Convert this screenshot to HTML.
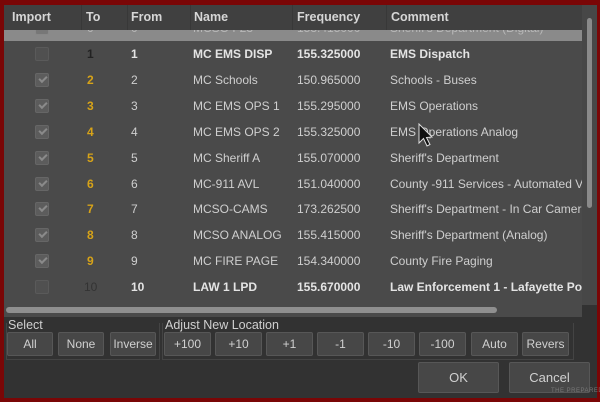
<!DOCTYPE html>
<html><head><meta charset="utf-8"><style>
*{margin:0;padding:0;box-sizing:border-box}
body{width:600px;height:402px;background:#7a0606;overflow:hidden;font-family:"Liberation Sans",sans-serif;font-size:12px;color:#cfcfcf;position:relative}
#win{position:absolute;left:4px;top:5px;width:593px;height:393px;background:#323232}
#tbl{position:absolute;left:0;top:0;width:578px;height:312px;background:#4a4a4a;overflow:hidden}
#hdr{position:absolute;left:0;top:0;width:578px;height:25px;background:#404040;font-weight:bold;font-size:12.5px;color:#d6d6d6}
#hdr span{position:absolute;top:5px}
.sep{position:absolute;top:0;width:1px;height:25px;background:#383838}
#rows{position:absolute;left:0;top:25px;width:578px;height:275px;overflow:hidden}
.r{position:absolute;left:0;width:578px;height:26px;white-space:nowrap}
.r span{position:absolute;top:6px}
.cb{position:absolute;left:31px;top:6px;width:14px;height:14px;border:1px solid #5a5a5a;background:#505050;border-radius:2px}
.cb.on{background:#5c5c5c;border-color:#666}
.cb.on:after{content:"";position:absolute;left:3px;top:2px;width:6px;height:3px;border-left:2px solid #8a8a8a;border-bottom:2px solid #8a8a8a;transform:rotate(-45deg)}
.to{color:#d7a318;font-weight:bold}
.b{font-weight:bold;color:#e4e4e4}
#vs{position:absolute;left:583px;top:13px;width:5px;height:190px;background:#8a8a8a;border-radius:3px}
#vtrack{position:absolute;left:578px;top:0;width:15px;height:300px;background:#474747}
#hs{position:absolute;left:2px;top:302px;width:491px;height:6px;background:#8f8f8f;border-radius:3px}
.lbl{position:absolute;top:313px;font-size:12.5px;color:#d0d0d0}
.btn{position:absolute;top:327px;height:24px;background:#474747;border:1px solid #575757;border-radius:2px;text-align:center;line-height:22px;color:#d0d0d0;font-size:12px;white-space:nowrap}
.grp{position:absolute;border:1px solid #444;border-top:none}
</style></head><body>
<div id="win">
<div id="vtrack"></div>
<div id="tbl">
<div id="hdr">
<span style="left:8px">Import</span><div class="sep" style="left:77px"></div>
<span style="left:82px">To</span><div class="sep" style="left:123px"></div>
<span style="left:127px">From</span><div class="sep" style="left:186px"></div>
<span style="left:190px">Name</span><div class="sep" style="left:288px"></div>
<span style="left:293px">Frequency</span><div class="sep" style="left:382px"></div>
<span style="left:387px">Comment</span>
</div>
<div id="rows">
<div class="r" style="top:-15px;background:#8a8a8a;color:#b8b8b8"><div class="cb" style="background:#777;border-color:#888"></div><span style="left:83px">0</span><span style="left:127px">0</span><span style="left:189px">MCSO F23</span><span style="left:293px">153.415000</span><span style="left:386px">Sheriff's Department (Digital)</span></div>
<div class="r b" style="top:11px"><div class="cb"></div><span style="left:83px;color:#222">1</span><span style="left:127px">1</span><span style="left:189px">MC EMS DISP</span><span style="left:293px">155.325000</span><span style="left:386px">EMS Dispatch</span></div>
<div class="r" style="top:37px"><div class="cb on"></div><span class="to" style="left:83px">2</span><span style="left:127px">2</span><span style="left:189px">MC Schools</span><span style="left:293px">150.965000</span><span style="left:386px">Schools - Buses</span></div>
<div class="r" style="top:63px"><div class="cb on"></div><span class="to" style="left:83px">3</span><span style="left:127px">3</span><span style="left:189px">MC EMS OPS 1</span><span style="left:293px">155.295000</span><span style="left:386px">EMS Operations</span></div>
<div class="r" style="top:89px"><div class="cb on"></div><span class="to" style="left:83px">4</span><span style="left:127px">4</span><span style="left:189px">MC EMS OPS 2</span><span style="left:293px">155.325000</span><span style="left:386px">EMS Operations Analog</span></div>
<div class="r" style="top:115px"><div class="cb on"></div><span class="to" style="left:83px">5</span><span style="left:127px">5</span><span style="left:189px">MC Sheriff A</span><span style="left:293px">155.070000</span><span style="left:386px">Sheriff's Department</span></div>
<div class="r" style="top:141px"><div class="cb on"></div><span class="to" style="left:83px">6</span><span style="left:127px">6</span><span style="left:189px">MC-911 AVL</span><span style="left:293px">151.040000</span><span style="left:386px">County -911 Services - Automated Vehicle</span></div>
<div class="r" style="top:166px"><div class="cb on"></div><span class="to" style="left:83px">7</span><span style="left:127px">7</span><span style="left:189px">MCSO-CAMS</span><span style="left:293px">173.262500</span><span style="left:386px">Sheriff's Department - In Car Camera</span></div>
<div class="r" style="top:192px"><div class="cb on"></div><span class="to" style="left:83px">8</span><span style="left:127px">8</span><span style="left:189px">MCSO ANALOG</span><span style="left:293px">155.415000</span><span style="left:386px">Sheriff's Department (Analog)</span></div>
<div class="r" style="top:218px"><div class="cb on"></div><span class="to" style="left:83px">9</span><span style="left:127px">9</span><span style="left:189px">MC FIRE PAGE</span><span style="left:293px">154.340000</span><span style="left:386px">County Fire Paging</span></div>
<div class="r b" style="top:244px"><div class="cb"></div><span style="left:80px;color:#333;font-weight:normal">10</span><span style="left:127px">10</span><span style="left:189px">LAW 1 LPD</span><span style="left:293px">155.670000</span><span style="left:386px">Law Enforcement 1 - Lafayette Police</span></div>
</div>
<div id="hs"></div>
</div>
<div id="vs"></div>
<svg style="position:absolute;left:414px;top:118px" width="16" height="26" viewBox="0 0 16 26"><path d="M1 1 L1 20 L5.5 15.5 L9 23 L12 21.5 L8.5 14.5 L14 14 Z" fill="#111" stroke="#ddd" stroke-width="1"/></svg>
<div class="grp" style="left:2px;top:318px;width:154px;height:37px"></div>
<div class="grp" style="left:158px;top:318px;width:412px;height:37px"></div>
<div class="lbl" style="left:4px">Select</div>
<div class="lbl" style="left:161px">Adjust New Location</div>
<div class="btn" style="left:3px;width:46px">All</div>
<div class="btn" style="left:54px;width:46px">None</div>
<div class="btn" style="left:106px;width:46px;overflow:hidden">Inverse</div>
<div class="btn" style="left:160px;width:47px">+100</div>
<div class="btn" style="left:211px;width:47px">+10</div>
<div class="btn" style="left:262px;width:47px">+1</div>
<div class="btn" style="left:313px;width:47px">-1</div>
<div class="btn" style="left:364px;width:47px">-10</div>
<div class="btn" style="left:415px;width:47px">-100</div>
<div class="btn" style="left:467px;width:47px">Auto</div>
<div class="btn" style="left:518px;width:47px;overflow:hidden">Revers</div>
<div class="btn" style="left:414px;top:357px;width:81px;height:31px;line-height:29px;font-size:13px">OK</div>
<div class="btn" style="left:505px;top:357px;width:81px;height:31px;line-height:29px;font-size:13px">Cancel</div>
<div style="position:absolute;left:547px;top:383px;font-size:6px;color:#777;letter-spacing:0.5px;white-space:nowrap">THE PREPARED</div>
</div>
</body></html>
